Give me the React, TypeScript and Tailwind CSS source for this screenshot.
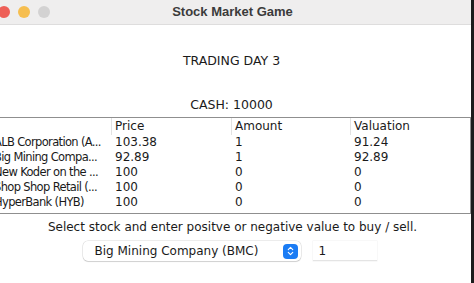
import { ChevronDown, ChevronUp } from 'lucide-react';

const rows = [
  { name: 'ALB Corporation (A...', price: '103.38', amount: '1', valuation: '91.24' },
  { name: 'Big Mining Compa...', price: '92.89', amount: '1', valuation: '92.89' },
  { name: 'New Koder on the ...', price: '100', amount: '0', valuation: '0' },
  { name: 'Shop Shop Retail (...', price: '100', amount: '0', valuation: '0' },
  { name: 'HyperBank (HYB)', price: '100', amount: '0', valuation: '0' },
];

const headers = ['', 'Price', 'Amount', 'Valuation'];

export default function App() {
  return (
    <div className="flex w-[474px] h-[283px] overflow-hidden bg-white font-['DejaVu_Sans',sans-serif] text-[#1a1a1a]">
      <div className="flex flex-col flex-1 min-w-0">
        {/* title bar */}
        <div className="grid h-[25px] shrink-0 bg-[#efeeee] border-b border-[#dedddd]">
          <div className="[grid-area:1/1] flex items-center gap-2 -ml-[2px]">
            <span className="w-3 h-3 rounded-full bg-[#ee5f57]" />
            <span className="w-3 h-3 rounded-full bg-[#f6be4f]" />
            <span className="w-3 h-3 rounded-full bg-[#d3d2d2]" />
          </div>
          <div className="[grid-area:1/1] flex items-center justify-center text-[13px] font-bold text-[#3b3b3b] font-['Liberation_Sans',sans-serif] pr-[6px]">
            Stock Market Game
          </div>
        </div>

        <div className="flex flex-col items-center pt-[27px]">
          <div className="text-[12.5px] leading-[18px] pr-[8px]">TRADING DAY 3</div>
          <div className="text-[12.5px] leading-[18px] mt-[26px] pr-[8px]">CASH: 10000</div>
        </div>

        {/* table */}
        <div className="overflow-hidden mt-[3px]">
          <div className="-ml-[9px] w-[480px] border-t border-[#8f8f8f] border-r border-b text-[12px]">
            <div className="grid grid-cols-[120px_120px_119px_120px] h-[17px] items-center">
              {headers.map((h, i) => (
                <div key={i} className={`pl-[3px] leading-[17px] ${i > 0 ? 'border-l border-[#e2e2e2]' : ''}`}>
                  {h}
                </div>
              ))}
            </div>
            {rows.map((r) => (
              <div key={r.name} className="grid grid-cols-[120px_120px_119px_120px] h-[15px] leading-[15px]">
                <div className="pl-[3px] whitespace-nowrap overflow-hidden text-[11.5px] tracking-[-0.65px]">{r.name}</div>
                <div className="pl-[4px]">{r.price}</div>
                <div className="pl-[4px]">{r.amount}</div>
                <div className="pl-[4px]">{r.valuation}</div>
              </div>
            ))}
            <div className="h-[3px]" />
          </div>
        </div>

        <div className="text-center text-[12px] leading-[18px] mt-[4px] pr-[6px]">
          Select stock and enter positve or negative value to buy / sell.
        </div>

        <div className="flex items-center justify-center gap-3 mt-[5px] pr-[12px]">
          <div className="flex items-center w-[218px] h-[20px] rounded-[5px] bg-white shadow-[0_0_0_0.5px_rgba(0,0,0,0.15),0_1px_1px_rgba(0,0,0,0.12)] pl-[12px] pr-[3px] text-[12px]">
            <span className="flex-1">Big Mining Company (BMC)</span>
            <span className="flex flex-col items-center justify-center w-[15px] h-[15px] rounded-[4px] bg-[#1b7cf4] text-white">
              <ChevronUp size={9} strokeWidth={3} className="-mb-[2px]" />
              <ChevronDown size={9} strokeWidth={3} className="-mt-[2px]" />
            </span>
          </div>
          <div className="flex items-center w-[64px] h-[20px] bg-white border-b border-[#e4e4e4] shadow-[0_0_0_0.5px_rgba(0,0,0,0.06)] pl-[6px] text-[12px]">
            1
          </div>
        </div>
      </div>
      <div className="w-[3px] shrink-0 bg-[#1c1c1c]" />
    </div>
  );
}
